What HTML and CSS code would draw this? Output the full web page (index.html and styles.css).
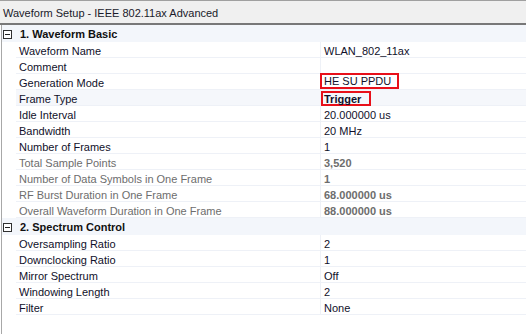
FILE: index.html
```
<!DOCTYPE html>
<html>
<head>
<meta charset="utf-8">
<link rel="stylesheet" href="styles.css">
</head>
<body>
<div class="panel">
  <div class="title">Waveform Setup - IEEE 802.11ax Advanced</div>
  <div class="grid">
    <div class="cat"><span class="toggle"></span><span class="cat-text">1. Waveform Basic</span></div>
    <div class="row"><div class="name">Waveform Name</div><div class="val">WLAN_802_11ax</div></div>
    <div class="row"><div class="name">Comment</div><div class="val"></div></div>
    <div class="row"><div class="name">Generation Mode</div><div class="val"><span class="mark">HE SU PPDU</span></div></div>
    <div class="row sel"><div class="name">Frame Type</div><div class="val"><span class="mark b trig">Trigger</span></div></div>
    <div class="row"><div class="name">Idle Interval</div><div class="val">20.000000 us</div></div>
    <div class="row"><div class="name">Bandwidth</div><div class="val">20 MHz</div></div>
    <div class="row"><div class="name">Number of Frames</div><div class="val">1</div></div>
    <div class="row dis"><div class="name">Total Sample Points</div><div class="val b">3,520</div></div>
    <div class="row dis"><div class="name">Number of Data Symbols in One Frame</div><div class="val b">1</div></div>
    <div class="row dis"><div class="name">RF Burst Duration in One Frame</div><div class="val b">68.000000 us</div></div>
    <div class="row dis"><div class="name">Overall Waveform Duration in One Frame</div><div class="val b">88.000000 us</div></div>
    <div class="cat"><span class="toggle"></span><span class="cat-text">2. Spectrum Control</span></div>
    <div class="row"><div class="name">Oversampling Ratio</div><div class="val">2</div></div>
    <div class="row"><div class="name">Downclocking Ratio</div><div class="val">1</div></div>
    <div class="row"><div class="name">Mirror Spectrum</div><div class="val">Off</div></div>
    <div class="row"><div class="name">Windowing Length</div><div class="val">2</div></div>
    <div class="row"><div class="name">Filter</div><div class="val">None</div></div>
  </div>
</div>
</body>
</html>
```
FILE: styles.css
```
html, body {
  margin: 0;
  padding: 0;
  background: #ffffff;
}
body {
  font-family: "Liberation Sans", Arial, sans-serif;
  font-size: 11px;
  color: #10102a;
  width: 526px;
  height: 334px;
  overflow: hidden;
}
.panel {
  display: flex;
  flex-direction: column;
  height: 334px;
}
.title {
  height: 21px;
  padding-top: 1px;
  line-height: 22px;
  background: #f0f0f0;
  border-top: 1px solid #a0a0a0;
  border-bottom: 2px solid #787878;
  padding-left: 3px;
  color: #1a1a2a;
}
.grid {
  flex: 1;
  margin-left: 1px;
  border-left: 1px solid #a8a8a8;
  display: flex;
  flex-direction: column;
}
.cat {
  height: 15px;
  padding-top: 2px;
  line-height: 15px;
  background: #f3f6fb;
  display: flex;
  align-items: flex-start;
  font-weight: bold;
  color: #101010;
}
.cat-text {
  margin-left: 8px;
}
.toggle {
  width: 9px;
  height: 9px;
  box-sizing: border-box;
  border: 1px solid #303030;
  margin-left: 1px;
  margin-top: 3px;
  position: relative;
  background: #fff;
}
.toggle::after {
  content: "";
  position: absolute;
  left: 1px;
  right: 1px;
  top: 3px;
  height: 1px;
  background: #202020;
}
.row {
  display: grid;
  grid-template-columns: 304px 1fr;
  margin-left: 14px;
  height: 15px;
  border-bottom: 1px solid #eef1f7;
}
.name, .val {
  height: 13px;
  padding-top: 2px;
  line-height: 15px;
  white-space: nowrap;
}
.name {
  padding-left: 3px;
}
.val {
  border-left: 1px solid #eef1f7;
  padding-left: 3px;
}
.sel {
  background: #f5f7fb;
}
.dis {
  color: #6d6d6d;
}
.b {
  font-weight: bold;
}
.mark {
  display: inline-block;
  box-sizing: border-box;
  height: 16px;
  line-height: 13px;
  border: 2px solid #e8101a;
  margin-left: -4px;
  padding: 0 6px 0 2px;
  margin-top: -3px;
  vertical-align: top;
}
.mark.trig {
  margin-left: -3px;
  padding: 0 8px 0 1px;
  margin-top: -1px;
  height: 15px;
  line-height: 13px;
}
```
